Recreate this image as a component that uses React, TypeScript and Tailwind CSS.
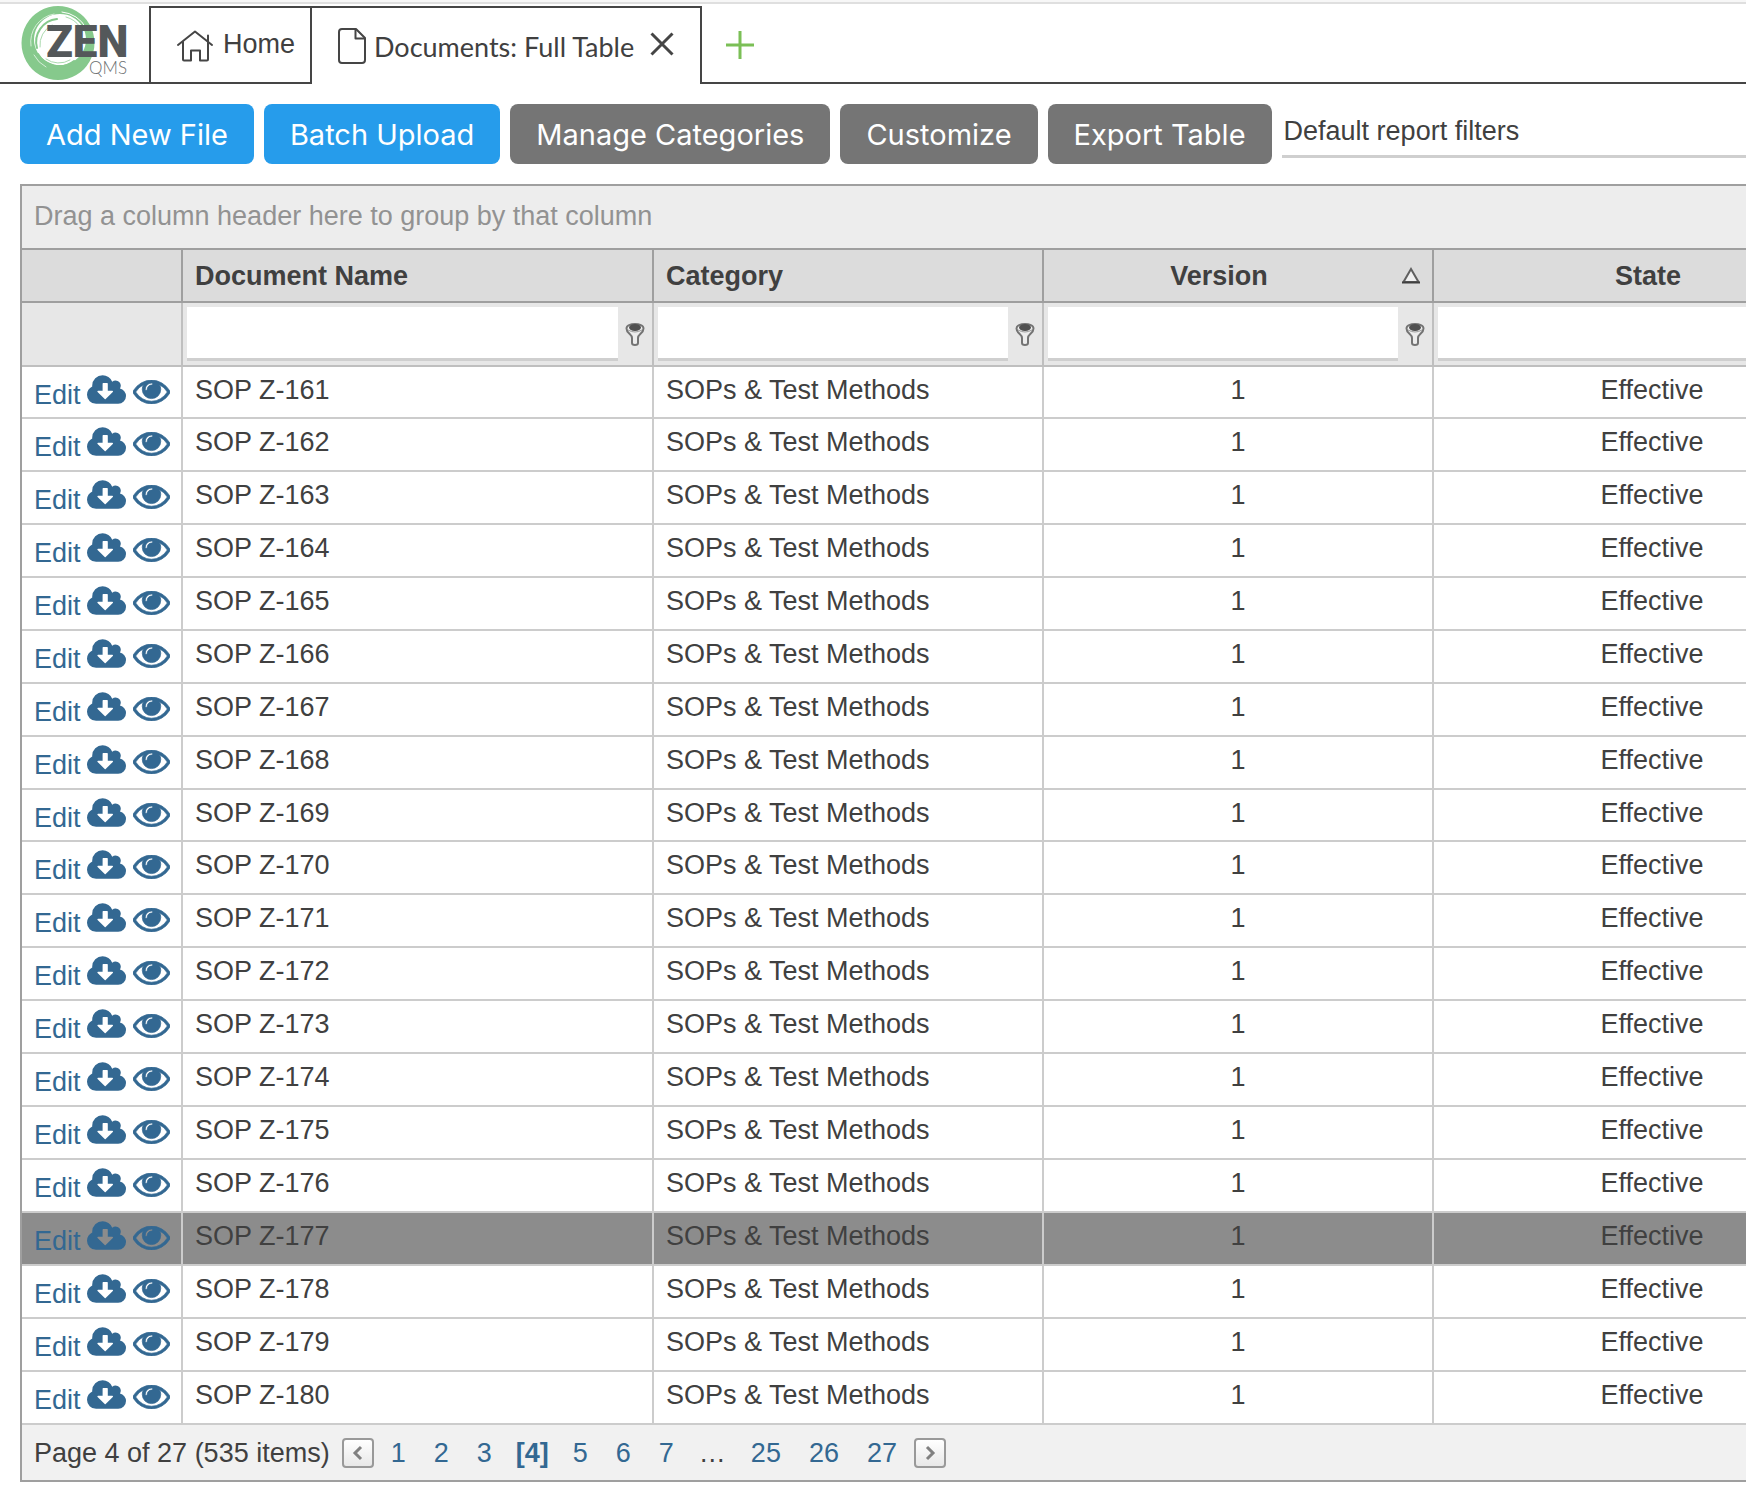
import React from "react";

const documents = Array.from({ length: 20 }, (_, i) => ({
  name: `SOP Z-${161 + i}`,
  category: "SOPs & Test Methods",
  version: 1,
  state: "Effective",
}));

function Logo() {
  return (
    <svg viewBox="0 0 149 78" className="h-[78px] w-[149px]" role="img" aria-label="ZEN QMS">
      <path
        fill="#86c98c"
        fillRule="evenodd"
        d="M58 2a36.500 37 0 1 0 .01 0ZM60 10a26 25.500 0 1 1-.01 0Z"
      />
      <g fill="none" strokeLinecap="round">
        <path d="M31 42a28 28 0 0 1 23-32" stroke="#d7eed9" strokeWidth="1" />
        <path d="M34 51a29 29 0 0 0 12 12" stroke="#d7eed9" strokeWidth="1" />
        <path d="M62 8a30 30 0 0 1 24 16" stroke="#ffffff" strokeWidth="1" />
        <path d="M37 44a23 23 0 0 1 20-29" stroke="#86c98c" strokeWidth="2" />
        <path d="M40 43a22 22 0 0 1 12-22" stroke="#a9d9ad" strokeWidth="1" />
        <path d="M38 50a24 24 0 0 0 36 7" stroke="#86c98c" strokeWidth="2" />
        <path d="M46 55a22 22 0 0 0 24 1" stroke="#a9d9ad" strokeWidth="1" />
        <path d="M66 13a24 24 0 0 1 14 10" stroke="#a9d9ad" strokeWidth="1" />
      </g>
      <text x="46" y="53" fontFamily="Roboto" fontWeight="900" fontSize="44" fill="#54585a">
        ZEN
      </text>
      <text x="89" y="70" fontFamily="Lato" fontWeight="300" fontSize="17" fill="#6b6f71">
        QMS
      </text>
    </svg>
  );
}

function HomeIcon() {
  return (
    <svg viewBox="0 0 36 32" className="h-8 w-9" fill="none" stroke="#454545" strokeWidth="2" strokeLinecap="round" strokeLinejoin="round" aria-hidden="true">
      <path d="M1 15 18 1.500 35 15" />
      <path d="M6 12v17.500q0 1 1 1h7v-10h9v10h7q1 0 1-1V5.500" />
    </svg>
  );
}

function PageIcon() {
  return (
    <svg viewBox="0 0 28 36" className="h-9 w-7" fill="none" stroke="#454545" strokeWidth="2" strokeLinejoin="round" aria-hidden="true">
      <path d="M4 1h14l9 9v22a3 3 0 0 1-3 3H4a3 3 0 0 1-3-3V4a3 3 0 0 1 3-3Z" />
      <path d="M17.500 1v9.500H27" />
    </svg>
  );
}

function CloudDownloadIcon() {
  return (
    <svg viewBox="0 128 1920 1408" className="h-[29px] w-[39px]" fill="currentColor" aria-hidden="true">
      <path d="M1280 928q0-14-9-23t-23-9h-224v-352q0-13-9.500-22.500t-22.500-9.500h-192q-13 0-22.500 9.500t-9.500 22.500v352h-224q-13 0-22.500 9.500t-9.500 22.500q0 14 9 23l352 352q9 9 23 9t23-9l351-351q10-12 10-24zm640 224q0 159-112.500 271.500t-271.500 112.500h-1088q-185 0-316.500-131.500t-131.500-316.500q0-130 70-240t188-165q-2-30-2-43 0-212 150-362t362-150q156 0 285.500 87t188.500 231q71-62 166-62 106 0 181 75t75 181q0 76-41 138 130 31 213.500 135.500t83.500 238.500z" />
    </svg>
  );
}

function EyeIcon() {
  return (
    <svg viewBox="0 384 1792 1152" className="h-6 w-[37px]" fill="currentColor" stroke="currentColor" strokeWidth="36" aria-hidden="true">
      <path d="M1664 960q-152-236-381-353 61 104 61 225 0 185-131.500 316.500t-316.500 131.500-316.500-131.500-131.500-316.500q0-121 61-225-229 117-381 353 133 205 333.500 326.500t434.500 121.500 434.500-121.500 333.500-326.500zm-720-384q0-20-14-34t-34-14q-125 0-214.500 89.500t-89.500 214.500q0 20 14 34t34 14 34-14 14-34q0-86 61-147t147-61q20 0 34-14t14-34zm848 384q0 34-20 69-140 230-376.500 368.500t-499.500 138.500-499.500-139-376.500-368q-20-35-20-69t20-69q140-229 376.500-368t499.500-139 499.500 139 376.500 368q20 35 20 69z" />
    </svg>
  );
}

function FunnelIcon() {
  return (
    <svg viewBox="0 0 20 24" className="h-6 w-5" aria-hidden="true">
      <path d="M1.500 6.500c0 5 5.500 5.500 5.500 9.500v5a3 2 0 0 0 6 0v-5c0-4 5.500-4.500 5.500-9.500 0-6-17-6-17 0Z" fill="#ececec" stroke="#747474" strokeWidth="2" />
      <ellipse cx="10" cy="5.500" rx="6" ry="3.500" fill="#505050" />
      <path d="M3 8q7 4 14 0" fill="none" stroke="#9a9a9a" strokeWidth="1" />
    </svg>
  );
}

const toolbar = [
  { label: "Add New File", primary: true },
  { label: "Batch Upload", primary: true },
  { label: "Manage Categories", primary: false },
  { label: "Customize", primary: false },
  { label: "Export Table", primary: false },
];

function PagerArrow({ label, d }: { label: string; d: string }) {
  return (
    <button
      type="button"
      aria-label={label}
      className="flex h-[30px] w-8 items-center justify-center rounded-[4px] border-2 border-[#999999] bg-linear-to-b from-white to-[#e8e8e8]"
    >
      <svg viewBox="0 0 12 16" className="h-4 w-3" fill="none" stroke="#808080" strokeWidth="3" aria-hidden="true">
        <path d={d} />
      </svg>
    </button>
  );
}

function FilterCell({ label, last }: { label: string; last?: boolean }) {
  return (
    <td className={last ? "border-b-2 border-[#bfbfbf] p-0" : "border-r-2 border-b-2 border-[#bfbfbf] p-0"}>
      <div className="flex items-center py-1 pl-1">
        <input
          type="text"
          aria-label={`Filter by ${label}`}
          className="h-[54px] min-w-0 flex-1 border-b-3 border-[#cfcfcf] bg-white px-2 outline-none"
        />
        <button type="button" aria-label={`${label} filter options`} className="flex w-[34px] justify-center">
          <FunnelIcon />
        </button>
      </div>
    </td>
  );
}

export default function App() {
  return (
    <div className="overflow-x-hidden bg-white pb-[11px] font-['Liberation_Sans',Arial,sans-serif] text-[27px] leading-[30px] text-[#404040]">
      <div className="h-1 border-b-2 border-[#dfdfdf] bg-[#f7f7f7]" />

      <header className="flex h-20 items-stretch">
        <div className="w-[149px] border-b-2 border-[#454545]">
          <Logo />
        </div>
        <nav aria-label="Open tabs" className="mt-0.5 flex">
          <a href="#home" className="flex w-[163px] items-center border-2 border-[#454545] pt-0.5 pl-[26px]">
            <HomeIcon />
            <span className="pb-1 pl-2.5">Home</span>
          </a>
          <div className="flex w-[390px] items-center border-t-2 border-r-2 border-[#454545] pl-[26px]">
            <PageIcon />
            <a href="#documents" className="pt-0.5 pl-2 font-[Lato,sans-serif]">
              Documents: Full Table
            </a>
            <button type="button" aria-label="Close tab" className="ml-4 pb-1">
              <svg viewBox="0 0 24 24" className="size-6" fill="none" stroke="#454545" strokeWidth="3" aria-hidden="true">
                <path d="M1.500 1.500l21 21M22.500 1.500l-21 21" />
              </svg>
            </button>
          </div>
        </nav>
        <div className="flex flex-1 items-center border-b-2 border-[#454545] pt-1 pl-6">
          <button type="button" aria-label="New tab">
            <svg viewBox="0 0 28 28" className="size-7" fill="none" stroke="#7bbf56" strokeWidth="3" aria-hidden="true">
              <path d="M14 0v28M0 14h28" />
            </svg>
          </button>
        </div>
      </header>

      <div className="flex gap-2.5 pt-5 pl-5">
        {toolbar.map((b) => (
          <button
            key={b.label}
            type="button"
            className={
              b.primary
                ? "h-15 shrink-0 rounded-lg bg-[#269ceb] px-[26px] pt-0.5 font-[Inter,sans-serif] text-[29px] text-white"
                : "h-15 shrink-0 rounded-lg bg-[#757575] px-[26px] pt-0.5 font-[Inter,sans-serif] text-[29px] text-white"
            }
          >
            {b.label}
          </button>
        ))}
        <input
          type="text"
          aria-label="Report filters"
          defaultValue="Default report filters"
          className="h-[54px] min-w-0 flex-1 border-b-3 border-[#cfcfcf] pt-1 pl-0.5 outline-none"
        />
      </div>

      <main className="mt-5 ml-5 overflow-hidden border-y-2 border-l-2 border-[#9f9f9f]">
        <div className="flex h-16 items-center border-b-2 border-[#9f9f9f] bg-[#ededed] px-3 pb-0.5 text-[#929292]">
          Drag a column header here to group by that column
        </div>
        <table className="w-full min-w-[1848px] table-fixed border-separate border-spacing-0">
          <colgroup>
            <col className="w-[161px]" />
            <col className="w-[471px]" />
            <col className="w-[390px]" />
            <col className="w-[390px]" />
            <col />
          </colgroup>
          <thead>
            <tr className="h-[53px] bg-[#dcdcdc] text-left">
              <td className="border-r-2 border-b-2 border-[#9f9f9f]" />
              <th scope="col" className="border-r-2 border-b-2 border-[#9f9f9f] px-3 py-0">Document Name</th>
              <th scope="col" className="border-r-2 border-b-2 border-[#9f9f9f] px-3 py-0">Category</th>
              <th scope="col" aria-sort="ascending" className="border-r-2 border-b-2 border-[#9f9f9f] px-3 py-0">
                <div className="flex items-center">
                  <span className="flex-1 pr-5 text-center">Version</span>
                  <svg viewBox="0 0 18 17" className="h-[17px] w-[18px]" aria-hidden="true">
                    <path d="M9 2 16.500 15h-15Z" fill="#f0f0f0" stroke="#606060" strokeWidth="2" />
                    <path d="M0 15.500h18" stroke="#404040" strokeWidth="2" />
                  </svg>
                </div>
              </th>
              <th scope="col" className="border-b-2 border-[#9f9f9f] py-0 pr-2 text-center">State</th>
            </tr>
            <tr className="bg-[#e7e7e7]">
              <td className="border-r-2 border-b-2 border-[#bfbfbf]" />
              <FilterCell label="Document Name" />
              <FilterCell label="Category" />
              <FilterCell label="Version" />
              <FilterCell label="State" last />
            </tr>
          </thead>
          <tbody>
            {documents.map((doc) => (
              <tr
                key={doc.name}
                className={
                  doc.name === "SOP Z-177"
                    ? "h-[53px] bg-[#8c8c8c] align-top"
                    : "h-[53px] bg-white align-top first:h-[52px] nth-[9]:h-[52px]"
                }
              >
                <td className="border-r-2 border-b-2 border-[#cccccc] p-0">
                  <div className="flex items-baseline pt-[13px] pl-3 text-[#336892]">
                    <a href="#edit">Edit</a>
                    <a href="#download" aria-label={`Download ${doc.name}`} className="-mt-2 ml-1.5">
                      <CloudDownloadIcon />
                    </a>
                    <a href="#view" aria-label={`View ${doc.name}`} className="ml-[7px]">
                      <EyeIcon />
                    </a>
                  </div>
                </td>
                <td className="border-r-2 border-b-2 border-[#cccccc] px-3 pt-2 pb-0">{doc.name}</td>
                <td className="border-r-2 border-b-2 border-[#cccccc] px-3 pt-2 pb-0">{doc.category}</td>
                <td className="border-r-2 border-b-2 border-[#cccccc] px-3 pt-2 pb-0 text-center">{doc.version}</td>
                <td className="border-b-2 border-[#cccccc] px-3 pt-2 pb-0 text-center">{doc.state}</td>
              </tr>
            ))}
          </tbody>
        </table>
        <nav aria-label="Pages" className="flex h-[55px] items-center bg-[#f1f1f1] pl-3">
          <span className="pr-3">Page 4 of 27 (535 items)</span>
          <PagerArrow label="Previous page" d="M9 2 3 8l6 6" />
          <div className="flex gap-7 px-[17px] text-[#336892]">
            <a href="#1">1</a>
            <a href="#2">2</a>
            <a href="#3">3</a>
            <a href="#4" aria-current="page" className="-mx-1 font-bold">[4]</a>
            <a href="#5">5</a>
            <a href="#6">6</a>
            <a href="#7">7</a>
            <span className="-mx-[3px] text-[#404040]">…</span>
            <a href="#25">25</a>
            <a href="#26">26</a>
            <a href="#27">27</a>
          </div>
          <PagerArrow label="Next page" d="M3 2l6 6-6 6" />
        </nav>
      </main>
    </div>
  );
}
